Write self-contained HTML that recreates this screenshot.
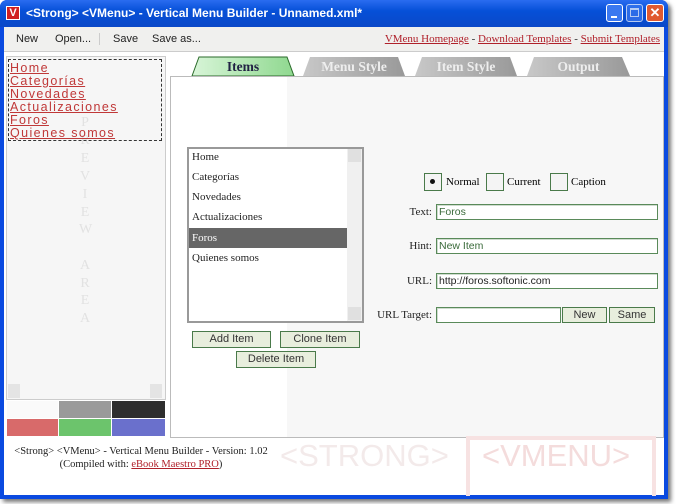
<!DOCTYPE html>
<html><head><style>
*{margin:0;padding:0;box-sizing:border-box}
body{width:680px;height:504px;background:#fff;position:relative;overflow:hidden;font-family:"Liberation Serif",serif;font-size:11px}
.a{position:absolute;white-space:nowrap}
.sans{font-family:"Liberation Sans",sans-serif}
.lnk{color:#b0202a;text-decoration:underline}
.menu div{font-family:"Liberation Sans",sans-serif;font-size:12.5px;letter-spacing:1.4px;color:#c03838;text-decoration:underline;line-height:13px}
.li{position:absolute;left:4px;font-size:11px;color:#222;white-space:nowrap}
.btn{position:absolute;background:#e8eedd;border:1px solid #4a7a4a;font-family:"Liberation Sans",sans-serif;font-size:11px;color:#333;text-align:center;line-height:14px}
.inp{position:absolute;background:#fff;border:1px solid #5a8a5a;box-shadow:inset 1px 1px 0 #cfdccf;font-family:"Liberation Sans",sans-serif;font-size:10.5px;color:#3a6a3a;padding-left:2px;line-height:15px;white-space:nowrap}
.lab{position:absolute;text-align:right;font-size:11px;color:#222}
.rb{position:absolute;width:18px;height:18px;border:1px solid #4a7a4a;background:#f4f4f4}
.pv{position:absolute;left:79px;width:12px;text-align:center;color:#e2e2e2;font-size:14px}
.tab{position:absolute;top:57px;height:19px;font-size:13.5px;font-weight:bold;text-align:center;line-height:19px}
</style></head><body>
<div class="a" style="left:0;top:0;width:668px;height:499px;background:#0a4ae0;border-radius:7px 7px 0 0;box-shadow:3px 3px 4px #777"></div>
<div class="a" style="left:0;top:0;width:668px;height:27px;background:linear-gradient(#2a6cf0,#0650d8 40%,#0a48c8);border-radius:7px 7px 0 0"></div>
<div class="a" style="left:6px;top:6px;width:14px;height:14px;background:#d02020;border:1px solid #fff;color:#fff;font:bold 11px 'Liberation Sans';text-align:center;line-height:12px">V</div>
<div class="a sans" style="left:26px;top:6px;color:#fff;font-size:12px;font-weight:bold">&lt;Strong&gt; &lt;VMenu&gt; - Vertical Menu Builder - Unnamed.xml*</div>
<div class="a" style="left:606px;top:4px;width:17px;height:18px;background:#3a78f0;border:1px solid #fff;border-radius:3px"><div class="a" style="left:4px;top:11px;width:6px;height:2px;background:#fff"></div></div>
<div class="a" style="left:626px;top:4px;width:17px;height:18px;background:#3a78f0;border:1px solid #fff;border-radius:3px;opacity:.7"><div class="a" style="left:3px;top:3px;width:9px;height:9px;border:1px solid #fff;border-top-width:2px"></div></div>
<div class="a" style="left:646px;top:4px;width:18px;height:18px;background:#e05a30;border:1px solid #fff;border-radius:3px;color:#fff;font:bold 13px 'Liberation Sans';text-align:center;line-height:16px">✕</div>
<div class="a" style="left:4px;top:27px;width:660px;height:468px;background:#fff"></div>
<div class="a" style="left:4px;top:27px;width:660px;height:25px;background:#f0f0ee;border-bottom:1px solid #ccc"></div>
<div class="a sans" style="left:16px;top:32px;font-size:11px;color:#222;line-height:14px">New</div>
<div class="a sans" style="left:55px;top:32px;font-size:11px;color:#222;line-height:14px">Open...</div>
<div class="a" style="left:99px;top:33px;width:1px;height:12px;background:#ccc"></div>
<div class="a sans" style="left:113px;top:32px;font-size:11px;color:#222;line-height:14px">Save</div>
<div class="a sans" style="left:152px;top:32px;font-size:11px;color:#222;line-height:14px">Save as...</div>
<div class="a" style="right:20px;top:32px;font-size:11px;color:#333;line-height:14px"><span class="lnk">VMenu Homepage</span> - <span class="lnk">Download Templates</span> - <span class="lnk">Submit Templates</span></div>
<div class="a" style="left:6px;top:56px;width:160px;height:344px;background:#f6f6f6;border:1px solid #ccc"></div>
<div class="pv" style="top:115px">P</div><div class="pv" style="top:133px">R</div><div class="pv" style="top:151px">E</div><div class="pv" style="top:169px">V</div><div class="pv" style="top:187px">I</div><div class="pv" style="top:205px">E</div><div class="pv" style="top:222px">W</div><div class="pv" style="top:258px">A</div><div class="pv" style="top:276px">R</div><div class="pv" style="top:293px">E</div><div class="pv" style="top:311px">A</div>
<div class="a menu" style="left:8px;top:59px;width:154px;height:82px;border:1px dashed #333;padding:2px 0 0 1px">
<div>Home</div><div>Categorías</div><div>Novedades</div><div>Actualizaciones</div><div>Foros</div><div>Quienes somos</div></div>
<div class="a" style="left:8px;top:384px;width:12px;height:14px;background:#e4e4e4"></div>
<div class="a" style="left:150px;top:384px;width:12px;height:14px;background:#e4e4e4"></div>
<div class="a" style="left:7px;top:401px;width:51px;height:17px;background:#fafafa"></div>
<div class="a" style="left:59px;top:401px;width:52px;height:17px;background:#9a9a9a"></div>
<div class="a" style="left:112px;top:401px;width:53px;height:17px;background:#2e2e2e"></div>
<div class="a" style="left:7px;top:419px;width:51px;height:17px;background:#d86a6a"></div>
<div class="a" style="left:59px;top:419px;width:52px;height:17px;background:#6cc46c"></div>
<div class="a" style="left:112px;top:419px;width:53px;height:17px;background:#6a70cc"></div>
<svg class="a" style="left:0;top:0" width="680" height="80">
<defs><linearGradient id="g" x1="0" x2="1"><stop offset="0" stop-color="#d8f5d8"/><stop offset="1" stop-color="#8fd88f"/></linearGradient>
<linearGradient id="h" x1="0" x2="1"><stop offset="0" stop-color="#c8c8c8"/><stop offset="1" stop-color="#999"/></linearGradient></defs>
<polygon points="192,76 199,57 287,57 294,76" fill="url(#g)" stroke="#2a6a2a"/>
<polygon points="303,76 310,57 398,57 405,76" fill="url(#h)"/>
<polygon points="415,76 422,57 510,57 517,76" fill="url(#h)"/>
<polygon points="527,76 534,57 622,57 630,76" fill="url(#h)"/>
</svg>
<div class="tab" style="left:192px;width:102px;color:#224">Items</div>
<div class="tab" style="left:303px;width:102px;color:#eee">Menu Style</div>
<div class="tab" style="left:415px;width:102px;color:#eee">Item Style</div>
<div class="tab" style="left:527px;width:103px;color:#eee">Output</div>
<div class="a" style="left:170px;top:76px;width:494px;height:362px;background:#f7f7f7;border:1px solid #bbb"></div>
<div class="a" style="left:171px;top:77px;width:116px;height:360px;background:#fff"></div>
<div class="a" style="left:187px;top:147px;width:177px;height:176px;background:#fff;border:2px solid #999"></div>
<div class="a" style="left:347px;top:149px;width:15px;height:172px;background:#f0f0f0"></div>
<div class="a" style="left:348px;top:149px;width:13px;height:13px;background:#e0e0e0"></div>
<div class="a" style="left:348px;top:307px;width:13px;height:13px;background:#e0e0e0"></div>
<div class="a" style="left:189px;top:228px;width:158px;height:20px;background:#666"></div>
<div class="a" style="left:188px;top:150px">
<div class="li" style="top:1px">Home</div><div class="li" style="top:21px">Categorías</div><div class="li" style="top:41px">Novedades</div><div class="li" style="top:61px">Actualizaciones</div><div class="li" style="top:82px;color:#fff">Foros</div><div class="li" style="top:102px">Quienes somos</div></div>
<div class="btn" style="left:192px;top:331px;width:79px;height:17px">Add Item</div>
<div class="btn" style="left:280px;top:331px;width:80px;height:17px">Clone Item</div>
<div class="btn" style="left:236px;top:351px;width:80px;height:17px">Delete Item</div>
<div class="rb" style="left:424px;top:173px"><div class="a" style="left:5px;top:5px;width:5px;height:5px;background:#111;border-radius:50%"></div></div>
<div class="a" style="left:446px;top:176px;font-size:11px">Normal</div>
<div class="rb" style="left:486px;top:173px"></div>
<div class="a" style="left:507px;top:176px;font-size:11px">Current</div>
<div class="rb" style="left:550px;top:173px"></div>
<div class="a" style="left:571px;top:176px;font-size:11px">Caption</div>
<div class="lab" style="left:370px;width:62px;top:206px">Text:</div>
<div class="inp" style="left:436px;top:204px;width:222px;height:16px">Foros</div>
<div class="lab" style="left:370px;width:62px;top:240px">Hint:</div>
<div class="inp" style="left:436px;top:238px;width:222px;height:16px">New Item</div>
<div class="lab" style="left:370px;width:62px;top:275px">URL:</div>
<div class="inp" style="left:436px;top:273px;width:222px;height:16px;color:#222">http://foros.softonic.com</div>
<div class="lab" style="left:360px;width:72px;top:309px">URL Target:</div>
<div class="inp" style="left:436px;top:307px;width:125px;height:16px"></div>
<div class="btn" style="left:562px;top:307px;width:45px;height:16px">New</div>
<div class="btn" style="left:609px;top:307px;width:46px;height:16px">Same</div>
<div class="a" style="left:10px;top:446px;width:262px;text-align:center;font-size:10.5px;color:#222">&lt;Strong&gt; &lt;VMenu&gt; - Vertical Menu Builder - Version: 1.02</div>
<div class="a" style="left:10px;top:459px;width:262px;text-align:center;font-size:10.5px;color:#222">(Compiled with: <span class="lnk">eBook Maestro PRO</span>)</div>
<div class="a sans" style="left:280px;top:439px;font-size:31px;color:#f3eaea;line-height:34px">&lt;STRONG&gt;</div>
<div class="a" style="left:466px;top:436px;width:190px;height:60px;border:4px solid #f7e2e2;border-bottom:none"></div>
<div class="a sans" style="left:482px;top:439px;font-size:31px;color:#f4dcdc;line-height:34px">&lt;VMENU&gt;</div>
</body></html>
